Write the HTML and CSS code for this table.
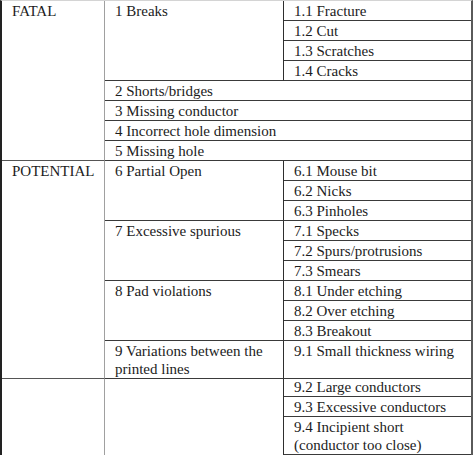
FILE: index.html
```html
<!DOCTYPE html>
<html>
<head>
<meta charset="utf-8">
<link rel="stylesheet" href="styles.css">
</head>
<body>
<table class="defects">
  <colgroup>
    <col class="c1"><col class="c2"><col class="c3">
  </colgroup>
  <tbody>
    <tr>
      <td class="cat" rowspan="8">FATAL</td>
      <td class="grp" rowspan="4">1 Breaks</td>
      <td class="sub">1.1 Fracture</td>
    </tr>
    <tr><td class="sub">1.2 Cut</td></tr>
    <tr><td class="sub">1.3 Scratches</td></tr>
    <tr><td class="sub">1.4 Cracks</td></tr>
    <tr><td class="wide" colspan="2">2 Shorts/bridges</td></tr>
    <tr><td class="wide" colspan="2">3 Missing conductor</td></tr>
    <tr><td class="wide" colspan="2">4 Incorrect hole dimension</td></tr>
    <tr><td class="wide" colspan="2">5 Missing hole</td></tr>
    <tr>
      <td class="cat" rowspan="10">POTENTIAL</td>
      <td class="grp" rowspan="3">6 Partial Open</td>
      <td class="sub">6.1 Mouse bit</td>
    </tr>
    <tr><td class="sub">6.2 Nicks</td></tr>
    <tr><td class="sub">6.3 Pinholes</td></tr>
    <tr>
      <td class="grp" rowspan="3">7 Excessive spurious</td>
      <td class="sub">7.1 Specks</td>
    </tr>
    <tr><td class="sub">7.2 Spurs/protrusions</td></tr>
    <tr><td class="sub">7.3 Smears</td></tr>
    <tr>
      <td class="grp" rowspan="3">8 Pad violations</td>
      <td class="sub">8.1 Under etching</td>
    </tr>
    <tr><td class="sub">8.2 Over etching</td></tr>
    <tr><td class="sub">8.3 Breakout</td></tr>
    <tr>
      <td class="grp">9 Variations between the printed lines</td>
      <td class="sub">9.1 Small thickness wiring</td>
    </tr>
    <tr>
      <td class="cat last" rowspan="3"></td>
      <td class="grp last" rowspan="3"></td>
      <td class="sub tight">9.2 Large conductors</td>
    </tr>
    <tr><td class="sub">9.3 Excessive conductors</td></tr>
    <tr><td class="sub">9.4 Incipient short (conductor too close)</td></tr>
  </tbody>
</table>
</body>
</html>
```

FILE: styles.css
```css
html, body {
  margin: 0;
  padding: 0;
  background: #ffffff;
}

.defects {
  width: 473px;
  table-layout: fixed;
  border-collapse: separate;
  border-spacing: 0;
  border-top: 1px solid #d4d4d4;
  border-left: 2px solid #222222;
  border-right: 2px solid #5a5a5a;
  font-family: "Liberation Serif", "Noto Serif", "FreeSerif", "Nimbus Roman", "Tinos", "Times New Roman", serif;
  font-size: 15px;
  line-height: 18px;
  color: #1c1c1c;
}

.c1 { width: 103px; }
.c2 { width: 179px; }
.c3 { width: auto; }

.defects td {
  vertical-align: top;
  padding: 1px 8px 0 10px;
  border-bottom: 1px solid #3a3a3a;
}

.cat {
  border-right: 1px solid #a0a0a0;
  border-bottom-color: #555555 !important;
}

.grp {
  border-right: 1px solid #2e2e2e;
}

.defects td.tight {
  padding-top: 0;
  line-height: 17px;
}

.last {
  border-bottom: none !important;
}
```
